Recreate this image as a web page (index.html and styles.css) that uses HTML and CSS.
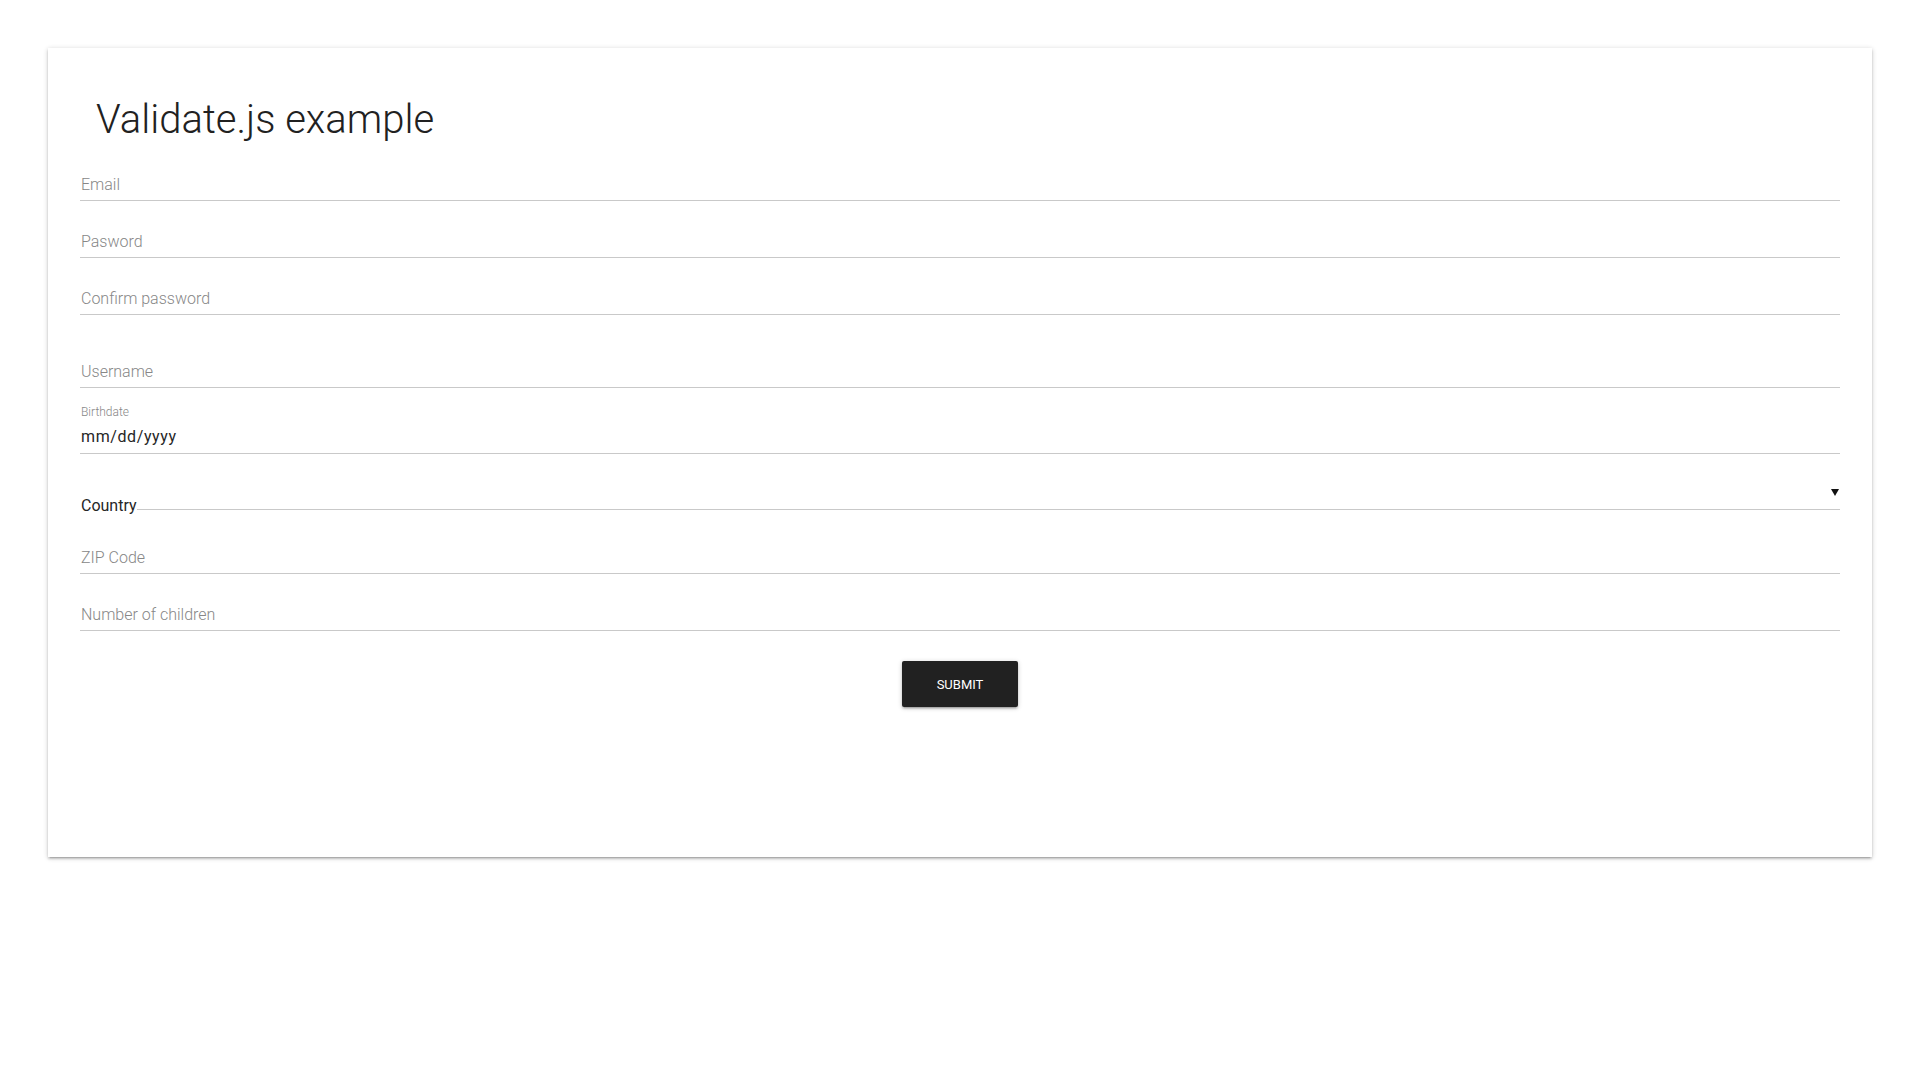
FILE: index.html
```html
<!DOCTYPE html>
<html lang="en">
<head>
<meta charset="utf-8">
<title>Validate.js example</title>
<link rel="stylesheet" href="styles.css">
</head>
<body>
<main class="card">
  <h1 class="title">Validate.js example</h1>
  <form class="form" onsubmit="return false">
    <div class="field"><span class="placeholder">Email</span></div>
    <div class="field"><span class="placeholder">Pasword</span></div>
    <div class="field"><span class="placeholder">Confirm password</span></div>
    <div class="field field-spaced"><span class="placeholder">Username</span></div>
    <div class="field field-date">
      <span class="small-label">Birthdate</span>
      <span class="value">mm/dd/yyyy</span>
    </div>
    <div class="select-row">
      <span class="select-label">Country</span>
      <span class="select-line"><span class="caret"></span></span>
    </div>
    <div class="field field-after-select"><span class="placeholder">ZIP Code</span></div>
    <div class="field"><span class="placeholder">Number of children</span></div>
    <div class="actions">
      <button class="btn" type="submit">SUBMIT</button>
    </div>
  </form>
</main>
</body>
</html>
```

FILE: styles.css
```css
html, body {
  margin: 0;
  padding: 0;
  background: #ffffff;
}

body {
  padding: 48px;
  font-family: Roboto, "Liberation Sans", Arial, sans-serif;
  color: #212121;
}

.card {
  display: block;
  background: #ffffff;
  padding: 50px 32px 150px;
  box-shadow: 0 2px 2px 0 rgba(0, 0, 0, 0.14), 0 3px 1px -2px rgba(0, 0, 0, 0.12), 0 1px 5px 0 rgba(0, 0, 0, 0.2);
}

.title {
  margin: 0 0 0 16px;
  font-size: 40px;
  line-height: 43px;
  font-weight: 300;
  color: #212121;
}

.form {
  margin: 34px 0 0;
  display: flex;
  flex-direction: column;
}

.field {
  display: flex;
  flex-direction: column;
  margin-top: 31px;
  padding-bottom: 5px;
  border-bottom: 1px solid #c9c9c9;
}

.field:first-child {
  margin-top: 0;
}

.field-spaced {
  margin-top: 47px;
}

.placeholder {
  padding-left: 1px;
  font-size: 16px;
  line-height: 20px;
  font-weight: 300;
  color: #878787;
}

.field-date {
  margin-top: 17px;
  padding-bottom: 6px;
}

.small-label {
  padding-left: 1px;
  font-size: 12px;
  line-height: 14px;
  font-weight: 300;
  color: #878787;
}

.value {
  margin-top: 8px;
  padding-left: 1px;
  font-size: 16px;
  line-height: 20px;
  font-weight: 400;
  letter-spacing: 0.6px;
  color: #262626;
}

.select-row {
  display: flex;
  align-items: flex-end;
  margin-top: 31px;
}

.select-label {
  padding-left: 1px;
  font-size: 16px;
  line-height: 20px;
  font-weight: 400;
  color: #262626;
  background: #ffffff;
}

.select-line {
  flex: 1;
  height: 25px;
  margin-bottom: 6px;
  border-bottom: 1px solid #c9c9c9;
  display: flex;
  justify-content: flex-end;
  align-items: flex-start;
  padding-top: 4px;
  box-sizing: border-box;
}

.caret {
  width: 0;
  height: 0;
  margin-right: 1px;
  border-left: 4px solid transparent;
  border-right: 4px solid transparent;
  border-top: 7px solid #111111;
}

.field-after-select {
  margin-top: 32px;
}

.actions {
  display: flex;
  justify-content: center;
  margin-top: 30px;
}

.btn {
  width: 116px;
  height: 46px;
  border: none;
  border-radius: 2px;
  background: #212121;
  color: #ffffff;
  font-family: Roboto, "Liberation Sans", Arial, sans-serif;
  font-size: 13px;
  font-weight: 400;
  padding: 0;
  cursor: pointer;
  box-shadow: 0 2px 2px 0 rgba(0, 0, 0, 0.14), 0 3px 1px -2px rgba(0, 0, 0, 0.12), 0 1px 5px 0 rgba(0, 0, 0, 0.2);
}
```
